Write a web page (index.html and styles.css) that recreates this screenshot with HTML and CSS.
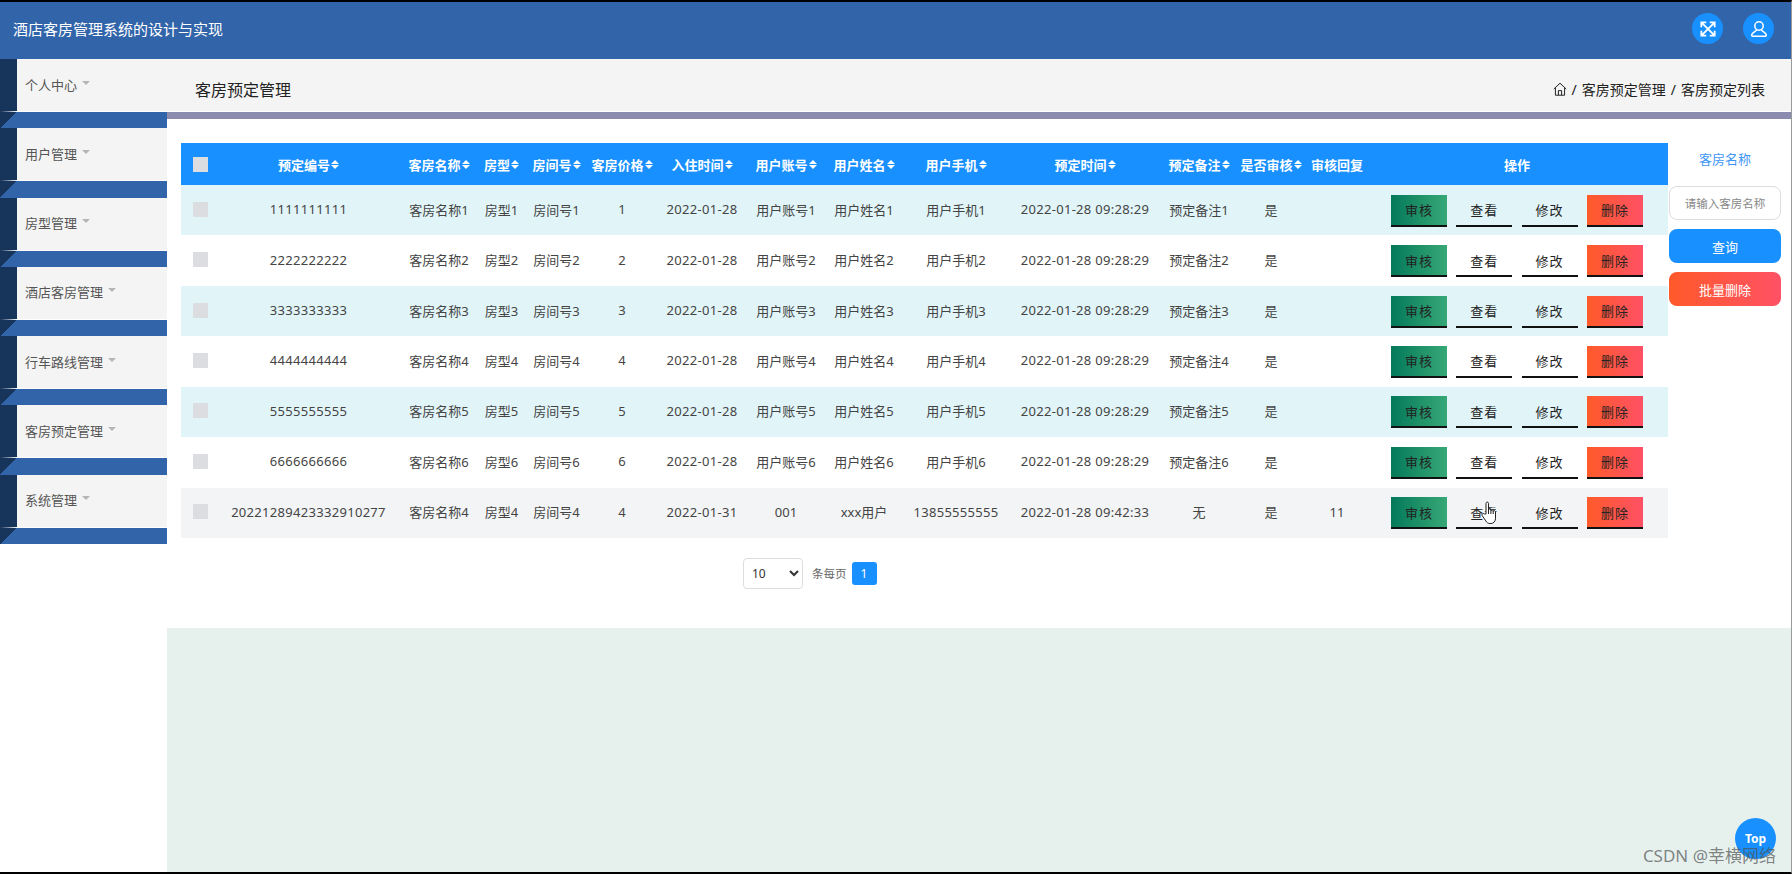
FILE: index.html
```html
<!DOCTYPE html>
<html lang="zh">
	<head>
		<meta charset="UTF-8" />
		<title>酒店客房管理系统的设计与实现</title>
		<link rel="stylesheet" href="styles.css">
	</head>
	<body>
		<header class="topbar">
			<div class="topbar-title">酒店客房管理系统的设计与实现</div>
			<div class="topbar-icons">
				<span class="round-icon">
					<svg viewBox="0 0 18 18" width="16" height="16" fill="none" stroke="#fff" stroke-width="2">
						<path d="M1.5 7V1.5H7M1.5 1.5l15 15M16.5 7V1.5H11M16.5 1.5l-15 15M1.5 11v5.5H7M16.5 11v5.5H11" />
					</svg>
				</span>
				<span class="round-icon">
					<svg viewBox="0 0 18 18" width="18" height="18" fill="none" stroke="#fff" stroke-width="1.5">
						<circle cx="9" cy="6" r="4.2" />
						<path d="M6.6 9.6C6.4 11.4 2.6 12.4 1.8 14.6c-.3.9 0 1.6 1 1.6h12.4c1 0 1.3-.7 1-1.6-.8-2.2-4.6-3.2-4.8-5" />
					</svg>
				</span>
			</div>
		</header>

		<div class="layout">
			<!-- 左侧菜单 -->
			<nav class="sidebar">
				<div class="menu-item"><div class="menu-label">个人中心<i class="caret"></i></div><div class="menu-band"></div></div>
				<div class="menu-item"><div class="menu-label">用户管理<i class="caret"></i></div><div class="menu-band"></div></div>
				<div class="menu-item"><div class="menu-label">房型管理<i class="caret"></i></div><div class="menu-band"></div></div>
				<div class="menu-item"><div class="menu-label">酒店客房管理<i class="caret"></i></div><div class="menu-band"></div></div>
				<div class="menu-item"><div class="menu-label">行车路线管理<i class="caret"></i></div><div class="menu-band"></div></div>
				<div class="menu-item"><div class="menu-label">客房预定管理<i class="caret"></i></div><div class="menu-band"></div></div>
				<div class="menu-item"><div class="menu-label">系统管理<i class="caret"></i></div><div class="menu-band"></div></div>
			</nav>

			<main class="main">
				<div class="title-bar">
					<h1 class="page-title">客房预定管理</h1>
					<div class="breadcrumb">
						<svg viewBox="0 0 14 14" width="14" height="14" fill="none" stroke="#222" stroke-width="1">
							<path d="M.8 7 7 1.2 13.2 7M2.4 5.8v7.4h9.2V5.8M5.4 13.2V8.6h3.2v4.6" />
						</svg>
						<span>/</span><span>客房预定管理</span><span>/</span><span>客房预定列表</span>
					</div>
				</div>
				<div class="title-strip"></div>

				<section class="content">
					<div class="content-row">
						<div class="table-box">
							<table class="data-table">
								<colgroup>
									<col class="c-check"><col class="c-code"><col class="c-name"><col class="c-type"><col class="c-room"><col class="c-price"><col class="c-date"><col class="c-account"><col class="c-user"><col class="c-phone"><col class="c-time"><col class="c-note"><col class="c-audit"><col class="c-reply"><col class="c-action">
								</colgroup>
								<thead>
									<tr>
										<th><span class="check"></span></th>
										<th>预定编号<i class="sort"></i></th>
										<th>客房名称<i class="sort"></i></th>
										<th>房型<i class="sort"></i></th>
										<th>房间号<i class="sort"></i></th>
										<th>客房价格<i class="sort"></i></th>
										<th>入住时间<i class="sort"></i></th>
										<th>用户账号<i class="sort"></i></th>
										<th>用户姓名<i class="sort"></i></th>
										<th>用户手机<i class="sort"></i></th>
										<th>预定时间<i class="sort"></i></th>
										<th>预定备注<i class="sort"></i></th>
										<th>是否审核<i class="sort"></i></th>
										<th>审核回复</th>
										<th>操作</th>
									</tr>
								</thead>
								<tbody>
									<tr>
										<td><span class="check"></span></td><td class="num">1111111111</td><td>客房名称1</td><td>房型1</td><td>房间号1</td><td>1</td><td class="num">2022-01-28</td><td>用户账号1</td><td>用户姓名1</td><td>用户手机1</td><td class="num">2022-01-28 09:28:29</td><td>预定备注1</td><td>是</td><td></td>
										<td><div class="actions"><button class="btn btn-audit">审核</button><button class="btn">查看</button><button class="btn">修改</button><button class="btn btn-del">删除</button></div></td>
									</tr>
									<tr>
										<td><span class="check"></span></td><td class="num">2222222222</td><td>客房名称2</td><td>房型2</td><td>房间号2</td><td>2</td><td class="num">2022-01-28</td><td>用户账号2</td><td>用户姓名2</td><td>用户手机2</td><td class="num">2022-01-28 09:28:29</td><td>预定备注2</td><td>是</td><td></td>
										<td><div class="actions"><button class="btn btn-audit">审核</button><button class="btn">查看</button><button class="btn">修改</button><button class="btn btn-del">删除</button></div></td>
									</tr>
									<tr>
										<td><span class="check"></span></td><td class="num">3333333333</td><td>客房名称3</td><td>房型3</td><td>房间号3</td><td>3</td><td class="num">2022-01-28</td><td>用户账号3</td><td>用户姓名3</td><td>用户手机3</td><td class="num">2022-01-28 09:28:29</td><td>预定备注3</td><td>是</td><td></td>
										<td><div class="actions"><button class="btn btn-audit">审核</button><button class="btn">查看</button><button class="btn">修改</button><button class="btn btn-del">删除</button></div></td>
									</tr>
									<tr>
										<td><span class="check"></span></td><td class="num">4444444444</td><td>客房名称4</td><td>房型4</td><td>房间号4</td><td>4</td><td class="num">2022-01-28</td><td>用户账号4</td><td>用户姓名4</td><td>用户手机4</td><td class="num">2022-01-28 09:28:29</td><td>预定备注4</td><td>是</td><td></td>
										<td><div class="actions"><button class="btn btn-audit">审核</button><button class="btn">查看</button><button class="btn">修改</button><button class="btn btn-del">删除</button></div></td>
									</tr>
									<tr>
										<td><span class="check"></span></td><td class="num">5555555555</td><td>客房名称5</td><td>房型5</td><td>房间号5</td><td>5</td><td class="num">2022-01-28</td><td>用户账号5</td><td>用户姓名5</td><td>用户手机5</td><td class="num">2022-01-28 09:28:29</td><td>预定备注5</td><td>是</td><td></td>
										<td><div class="actions"><button class="btn btn-audit">审核</button><button class="btn">查看</button><button class="btn">修改</button><button class="btn btn-del">删除</button></div></td>
									</tr>
									<tr>
										<td><span class="check"></span></td><td class="num">6666666666</td><td>客房名称6</td><td>房型6</td><td>房间号6</td><td>6</td><td class="num">2022-01-28</td><td>用户账号6</td><td>用户姓名6</td><td>用户手机6</td><td class="num">2022-01-28 09:28:29</td><td>预定备注6</td><td>是</td><td></td>
										<td><div class="actions"><button class="btn btn-audit">审核</button><button class="btn">查看</button><button class="btn">修改</button><button class="btn btn-del">删除</button></div></td>
									</tr>
									<tr class="row-hover">
										<td><span class="check"></span></td><td class="num">20221289423332910277</td><td>客房名称4</td><td>房型4</td><td>房间号4</td><td>4</td><td class="num">2022-01-31</td><td>001</td><td>xxx用户</td><td class="num">13855555555</td><td class="num">2022-01-28 09:42:33</td><td>无</td><td>是</td><td>11</td>
										<td>
											<div class="actions">
												<button class="btn btn-audit">审核</button>
												<button class="btn">查看
													<svg class="hand" viewBox="0 0 17 24" width="17" height="24" fill="#fff" stroke="#222" stroke-width="1" stroke-linejoin="round">
														<path d="M5 13V2.4c0-1.8 2.5-1.8 2.5 0V9c0-1.5 2.4-1.5 2.4 0v.8c0-1.4 2.3-1.4 2.3 0v.8c0-1.3 2.3-1.3 2.3.2v6.4c0 3-1.7 5.3-4.6 5.3H9c-2 0-3.2-.9-4.2-2.6L1.2 14.6c-.9-1.5 1-2.8 2.2-1.6z" />
														<path d="M7.5 9v4M9.9 9.8V13M12.2 10.6V13" fill="none" />
													</svg>
												</button>
												<button class="btn">修改</button>
												<button class="btn btn-del">删除</button>
											</div>
										</td>
									</tr>
								</tbody>
							</table>
							<div class="pager">
								<select class="pager-size"><option>10</option></select>
								<span class="pager-text">条每页</span>
								<span class="pager-num">1</span>
							</div>
						</div>

						<aside class="search">
							<label class="search-label">客房名称</label>
							<input class="search-input" type="text" placeholder="请输入客房名称">
							<button class="search-btn">查询</button>
							<button class="search-btn search-del">批量删除</button>
						</aside>
					</div>
				</section>

				<div class="lower"></div>
			</main>
		</div>

		<a class="to-top">Top</a>
		<div class="watermark">CSDN @幸横网络</div>
	</body>
</html>
```
FILE: styles.css
```css
* {
	box-sizing: border-box;
}

html,
body {
	margin: 0;
	padding: 0;
	width: 100%;
	height: 100%;
	overflow: hidden;
}

body {
	display: flex;
	flex-direction: column;
	position: relative;
	border-top: 2px solid #000;
	border-bottom: 2px solid #000;
	border-right: 1px solid #9a9a9a;
	font-family: "Noto Sans", "Noto Sans CJK SC", sans-serif;
	font-size: 13px;
	color: #444;
	background: #fff;
}

/* top bar */
.topbar {
	flex: none;
	height: 57px;
	display: flex;
	align-items: center;
	justify-content: space-between;
	padding: 0 17px 4px 13px;
	background: #3164a9;
}

.topbar-title {
	font-size: 15px;
	color: #fff;
}

.topbar-icons {
	display: flex;
	gap: 20px;
}

.round-icon {
	width: 31px;
	height: 31px;
	border-radius: 50%;
	display: flex;
	align-items: center;
	justify-content: center;
	background: #1890ff;
}

.layout {
	flex: 1;
	display: flex;
	min-height: 0;
}

/* sidebar */
.sidebar {
	flex: none;
	width: 167px;
}

.menu-label {
	height: 53px;
	display: flex;
	align-items: center;
	padding: 0 0 2px 8px;
	border-left: 17px solid #17345a;
	border-bottom: 1px solid #fff;
	background: #f4f4f4;
	font-size: 13px;
	color: #555;
}

.caret {
	width: 0;
	height: 0;
	margin: -3px 0 0 5px;
	border: 4px solid transparent;
	border-top: 4px solid #b5b5b5;
	border-bottom: 0;
}

.menu-band {
	height: 16.3px;
	background: linear-gradient(135deg, #17345a 50%, #3164a9 50%) left / 17px 100% no-repeat, #3164a9;
}

/* main */
.main {
	flex: 1;
	min-width: 0;
	display: flex;
	flex-direction: column;
}

.title-bar {
	flex: none;
	height: 53px;
	display: flex;
	align-items: center;
	justify-content: space-between;
	padding: 8px 26px 0 28px;
	background: #f4f4f4;
	border-bottom: 1px solid #fff;
}

.page-title {
	margin: 0;
	font-size: 16px;
	font-weight: 400;
	color: #222;
}

.breadcrumb {
	display: flex;
	align-items: center;
	gap: 5px;
	font-size: 14px;
	color: #222;
}

.title-strip {
	flex: none;
	height: 7px;
	background: #8a8bae;
}

.content {
	flex: none;
	height: 509px;
	padding: 24px 0 0 14px;
	background: #fff;
}

.content-row {
	display: flex;
}

.table-box {
	width: 1487px;
}

/* table */
.data-table {
	width: 100%;
	table-layout: fixed;
	border-collapse: collapse;
}

.c-check { width: 38px; }
.c-code { width: 179px; }
.c-name { width: 82px; }
.c-type { width: 43px; }
.c-room { width: 67px; }
.c-price { width: 64px; }
.c-date { width: 96px; }
.c-account { width: 72px; }
.c-user { width: 84px; }
.c-phone { width: 100px; }
.c-time { width: 158px; }
.c-note { width: 70px; }
.c-audit { width: 74px; }
.c-reply { width: 58px; }
.c-action { width: 302px; }

.data-table th {
	height: 42px;
	padding: 0;
	background: #1890ff;
	color: #fff;
	font-size: 13px;
	font-weight: 700;
	white-space: nowrap;
	text-align: center;
}

.data-table td {
	height: 50.43px;
	padding: 0 0 2px;
	text-align: center;
	white-space: nowrap;
}

.data-table td.num {
	letter-spacing: 0.3px;
}

.data-table tbody tr:nth-child(odd) td {
	background: #e1f5f9;
}

.data-table tbody tr.row-hover td {
	background: #f3f4f5;
}

.check {
	display: block;
	width: 15px;
	height: 15px;
	margin-left: 12px;
	background: #dcdde0;
}

.sort {
	display: inline-flex;
	flex-direction: column;
	gap: 1px;
	vertical-align: middle;
	margin: -2px 0 0 1px;
}

.sort::before,
.sort::after {
	content: "";
	width: 0;
	height: 0;
	border-left: 4px solid transparent;
	border-right: 4px solid transparent;
}

.sort::before {
	border-bottom: 4px solid #fff;
}

.sort::after {
	border-top: 4px solid #fff;
}

.actions {
	display: flex;
	gap: 9.3px;
	padding: 3px 0 0 25px;
}

.btn {
	position: relative;
	width: 56px;
	height: 32px;
	padding: 0;
	border: 0;
	border-bottom: 2px solid #111;
	background: transparent;
	color: #222;
	font-family: inherit;
	font-size: 13px;
	letter-spacing: 1px;
}

.btn-audit {
	background: linear-gradient(90deg, #04795a, #37a876);
}

.btn-del {
	background: linear-gradient(90deg, #ff5a2a, #ff5165);
}

.hand {
	position: absolute;
	left: 25px;
	top: 4px;
}

/* pager */
.pager {
	display: flex;
	align-items: center;
	margin: 20px 0 0 562px;
}

.pager-size {
	width: 60px;
	height: 31px;
	padding-left: 4px;
	border: 1px solid #ddd;
	border-radius: 4px;
	background: #fff;
	color: #333;
	font-family: inherit;
	font-size: 12px;
}

.pager-text {
	margin: 0 5px 0 9px;
	font-size: 11.5px;
	color: #666;
}

.pager-num {
	width: 25px;
	height: 23px;
	line-height: 23px;
	border-radius: 3px;
	background: #1890ff;
	color: #fff;
	font-size: 12px;
	text-align: center;
}

/* search */
.search {
	width: 112px;
	margin-left: 1px;
	display: flex;
	flex-direction: column;
	align-items: center;
}

.search-label {
	height: 43px;
	line-height: 32px;
	color: #3f97f5;
	font-size: 13px;
}

.search-input {
	width: 112px;
	height: 34px;
	padding: 0;
	border: 1px solid #ddd;
	border-radius: 8px;
	background: #fff;
	font-family: inherit;
	font-size: 11.5px;
	text-align: center;
}

.search-input::placeholder {
	color: #888;
}

.search-btn {
	width: 112px;
	height: 34px;
	margin-top: 9px;
	border: 0;
	border-radius: 8px;
	background: #1890ff;
	color: #fff;
	font-family: inherit;
	font-size: 13px;
}

.search-del {
	background: linear-gradient(90deg, #ff5a2a, #ff5165);
}

.lower {
	flex: 1;
	background: #e6f1ee;
}

/* floating */
.to-top {
	position: absolute;
	right: 15px;
	bottom: 13px;
	width: 41px;
	height: 41px;
	line-height: 41px;
	border-radius: 50%;
	background: #1890ff;
	color: #fff;
	font-size: 12px;
	font-weight: 700;
	text-align: center;
}

.watermark {
	position: absolute;
	right: 15px;
	bottom: 6px;
	font-size: 17px;
	line-height: 20px;
	color: rgba(80, 80, 80, 0.7);
}
```
